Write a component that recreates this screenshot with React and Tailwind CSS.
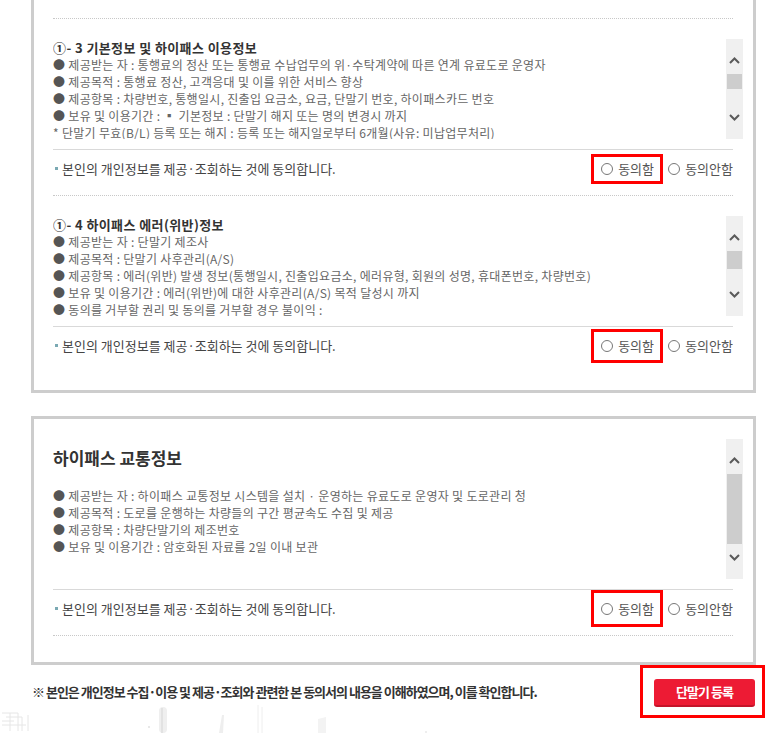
import React from "react";

const Chevron = ({ down }) => (
  <svg width="11" height="7" viewBox="0 0 11 7" className="block">
    <path
      d={down ? "M1 1 L5.5 5.5 L10 1" : "M1 6 L5.5 1.5 L10 6"}
      stroke="#5a5a5a"
      strokeWidth="2"
      fill="none"
    />
  </svg>
);

function ScrollBar({ thumb }) {
  return (
    <div className="w-[17px] shrink-0 bg-[#f0f0f0] flex flex-col items-center pt-[18px] pb-[18px]">
      <Chevron />
      <div className="mt-[10px] w-[15px] bg-[#cdcdcd]" style={{ height: thumb }} />
      <div className="flex-1" />
      <Chevron down />
    </div>
  );
}

function Radio({ label }) {
  return (
    <span className="flex items-center gap-[5px] text-[13px] text-[#555] tracking-[0px] leading-none">
      <span className="w-[12px] h-[12px] rounded-full border border-[#777] bg-white shrink-0" />
      <span>{label}</span>
    </span>
  );
}

function AgreeRow({ redH }) {
  return (
    <div className="h-[37px] flex items-center justify-between">
      <div className="flex items-center pl-[2px]">
        <span className="w-[3px] h-[3px] bg-[#7aa9b3] mr-[4px]" />
        <span className="text-[13px] text-[#444] tracking-[0px]">
          본인의 개인정보를 제공·조회하는 것에 동의합니다.
        </span>
      </div>
      <div className="flex items-center">
        <div
          className="border-[3px] border-[#ff0000] flex items-center pl-[7px] pr-[3px] w-[72px]"
          style={{ height: redH }}
        >
          <Radio label="동의함" />
        </div>
        <div className="ml-[5px]">
          <Radio label="동의안함" />
        </div>
      </div>
    </div>
  );
}

function Line({ children }) {
  const bullet = children.startsWith("●");
  return (
    <p className="text-[12px] leading-[17px] text-[#666] tracking-[0.3px] whitespace-nowrap">
      {bullet ? (
        <>
          <span className="text-[#555] mr-[3px]">●</span>
          {children.slice(2)}
        </>
      ) : (
        children
      )}
    </p>
  );
}

function Section({ title, lines, thumb, height }) {
  return (
    <div>
      <div className="mt-[20px] mr-[-10px] flex overflow-hidden" style={{ height }}>
        <div className="flex-1 overflow-hidden">
          <p className="text-[13px] leading-[17px] font-bold text-[#333] tracking-[0.4px] whitespace-nowrap">
            {title}
          </p>
          {lines.map((l, i) => (
            <Line key={i}>{l}</Line>
          ))}
        </div>
        <ScrollBar thumb={thumb} />
      </div>
    </div>
  );
}

export default function App() {
  return (
    <div className="w-[766px] h-[733px] overflow-hidden bg-white font-['Noto_Sans_CJK_KR','Noto_Sans',sans-serif]">
      <div className="pl-[31px]">
        {/* Box 1 */}
        <div className="w-[725px] border-x-[3px] border-b-[3px] border-[#cdcdcd] pl-[19px] pr-[20px] pt-[18px] pb-[26px]">
          <div className="border-t border-dotted border-[#c8c8c8]" />
          <Section
            title="①- 3 기본정보 및 하이패스 이용정보"
            height={100}
            thumb={15}
            lines={[
              "● 제공받는 자 : 통행료의 정산 또는 통행료 수납업무의 위·수탁계약에 따른 연계 유료도로 운영자",
              "● 제공목적 : 통행료 정산, 고객응대 및 이를 위한 서비스 향상",
              "● 제공항목 : 차량번호, 통행일시, 진출입 요금소, 요금, 단말기 번호, 하이패스카드 번호",
              "● 보유 및 이용기간 : ▪ 기본정보 : 단말기 해지 또는 명의 변경시 까지",
              "* 단말기 무효(B/L) 등록 또는 해지 : 등록 또는 해지일로부터 6개월(사유: 미납업무처리)",
            ]}
          />
          <div className="mt-[10px] border-t border-[#d9d9d9]" />
          <AgreeRow redH={30} />
          <div className="mt-[8px] border-t border-dotted border-[#c8c8c8]" />
          <Section
            title="①- 4 하이패스 에러(위반)정보"
            height={100}
            thumb={18}
            lines={[
              "● 제공받는 자 : 단말기 제조사",
              "● 제공목적 : 단말기 사후관리(A/S)",
              "● 제공항목 : 에러(위반) 발생 정보(통행일시, 진출입요금소, 에러유형, 회원의 성명, 휴대폰번호, 차량번호)",
              "● 보유 및 이용기간 : 에러(위반)에 대한 사후관리(A/S) 목적 달성시 까지",
              "● 동의를 거부할 권리 및 동의를 거부할 경우 불이익 :",
            ]}
          />
          <div className="mt-[10px] border-t border-[#d9d9d9]" />
          <AgreeRow redH={34} />
        </div>

        {/* Box 2 */}
        <div className="mt-[23px] w-[725px] border-[3px] border-[#cdcdcd] pl-[19px] pr-[20px] pt-[20px] pb-[26px]">
          <div className="mr-[-10px] flex h-[140px] overflow-hidden">
            <div className="flex-1 overflow-hidden pt-[10px]">
              <p className="text-[17px] leading-[18px] font-bold text-[#333] tracking-[0px]">
                하이패스 교통정보
              </p>
              <div className="mt-[20px]">
                <Line>● 제공받는 자 : 하이패스 교통정보 시스템을 설치 · 운영하는 유료도로 운영자 및 도로관리 청</Line>
                <Line>● 제공목적 : 도로를 운행하는 차량들의 구간 평균속도 수집 및 제공</Line>
                <Line>● 제공항목 : 차량단말기의 제조번호</Line>
                <Line>● 보유 및 이용기간 : 암호화된 자료를 2일 이내 보관</Line>
              </div>
            </div>
            <ScrollBar thumb={70} />
          </div>
          <div className="mt-[10px] border-t border-[#d9d9d9]" />
          <AgreeRow redH={37} />
          <div className="mt-[8px] border-t border-dotted border-[#c8c8c8]" />
        </div>
      </div>

      {/* Footer */}
      <div className="relative">
        <svg
          className="absolute left-0 top-[38px]"
          width="766"
          height="30"
          viewBox="0 0 766 30"
        >
          <g stroke="#e6e6e6" strokeWidth="1" fill="none">
            <path d="M2 10 H18 V28 M6 14 H22 V28 M2 18 H14 M2 22 H26 M10 10 V28" />
            <path d="M28 12 V28" />
          </g>
          <rect x="159" y="4" width="8" height="26" rx="4" fill="#efefef" />
          <rect x="161" y="5" width="2" height="25" fill="#e2e2e2" />
          <path d="M219 30 L222 12 L224 12 L223 30 Z" fill="#eeeeee" />
          <path d="M258 2 V30 M262 4 V30" stroke="#eeeeee" strokeWidth="1" />
          <rect x="148" y="23" width="2" height="2" fill="#e8e8e8" />
          <path d="M318 16 L326 14 V30 H318 Z" fill="#f3f3f3" />
          <rect x="425" y="28" width="2" height="2" fill="#eeeeee" />
        </svg>
        <div className="relative flex items-center justify-between pl-[32px]">
          <p className="text-[13px] font-bold text-[#333] tracking-[-1px] whitespace-nowrap">
            ※ 본인은 개인정보 수집·이용 및 제공·조회와 관련한 본 동의서의 내용을 이해하였으며, 이를 확인합니다.
          </p>
          <div className="mr-[1px] border-[3px] border-[#ff0000] pl-[11px] pr-[7px] pt-[11px] pb-[8px]">
            <button className="w-[101px] h-[28px] rounded-[3px] bg-[#ed1b34] border-b-2 border-[#c4142a] text-white text-[13px] font-bold tracking-[-1px] flex items-center justify-center">
              단말기 등록
            </button>
          </div>
        </div>
      </div>
    </div>
  );
}
